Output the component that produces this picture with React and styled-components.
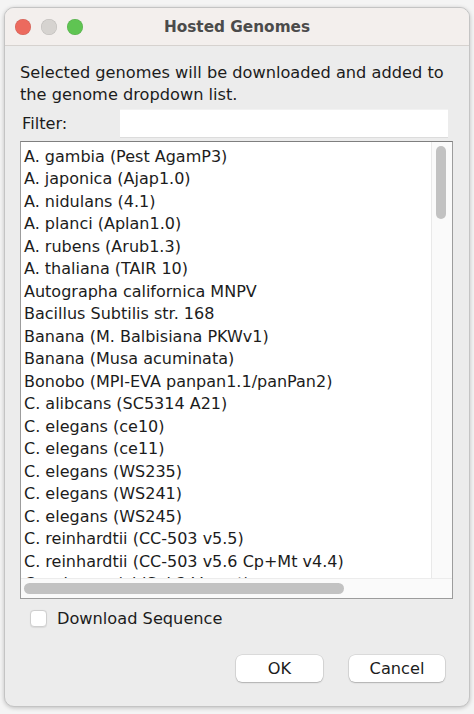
import React from "react";
import styled, { createGlobalStyle } from "styled-components";

const Global = createGlobalStyle`
  html, body { margin: 0; padding: 0; background: #f4f4f4; }
  body { font-family: "DejaVu Sans", "Liberation Sans", sans-serif; color: #1c1c1c; }
  * { box-sizing: border-box; }
`;

const Screen = styled.div`
  width: 474px;
  height: 714px;
  padding: 7px 4px 7px 4px;
`;

const Window = styled.div`
  width: 466px;
  height: 700px;
  display: flex;
  flex-direction: column;
  background: #ececec;
  border: 1px solid #c4c4c4;
  border-radius: 10px;
  overflow: hidden;
  box-shadow: 0 1px 4px rgba(0, 0, 0, 0.22);
`;

const TitleBar = styled.div`
  height: 38px;
  flex: none;
  display: grid;
  grid-template-columns: 1fr auto 1fr;
  align-items: center;
  background: #f3efed;
  border-bottom: 1px solid #d6d2cf;
  padding-left: 10px;
`;

const Lights = styled.div`
  display: flex;
  gap: 10px;
`;

const Light = styled.span`
  width: 16px;
  height: 16px;
  border-radius: 50%;
  background: ${(p) => p.$color};
  box-shadow: inset 0 0 0 0.5px rgba(0, 0, 0, 0.12);
`;

const Title = styled.div`
  font-weight: bold;
  font-size: 15.3px;
  color: #4b4b4b;
  margin-left: -10px;
`;

const Body = styled.div`
  flex: 1;
  display: flex;
  flex-direction: column;
  padding: 16px 16px 0 15px;
`;

const Description = styled.p`
  margin: 0;
  font-size: 16.2px;
  line-height: 22px;
  height: 44px;
`;

const FilterRow = styled.div`
  margin-top: 3px;
  display: flex;
  align-items: center;
  height: 28px;
  padding-right: 5px;
`;

const Label = styled.label`
  width: 100px;
  padding-left: 2px;
  font-size: 16.2px;
`;

const FilterInput = styled.input`
  flex: 1;
  height: 28px;
  border: none;
  outline: none;
  background: #ffffff;
  box-shadow: 0 1px 0 #dcdcdc, inset 0 1px 0 #f2f2f2;
  font: inherit;
`;

const ListBox = styled.div`
  margin-top: 4px;
  height: 458px;
  border: 1px solid #9c9c9c;
  border-top-color: #7f7f7f;
  background: #ffffff;
  display: grid;
  grid-template-columns: 1fr 21px;
  grid-template-rows: 1fr 20px;
`;

const Items = styled.div`
  overflow: hidden;
  padding: 3.5px 0 0 3px;
`;

const Item = styled.div`
  height: 22.5px;
  line-height: 22.5px;
  font-size: 16px;
  white-space: nowrap;
  color: #1c1c1c;
`;

const VTrack = styled.div`
  background: #fafafa;
  border-left: 1px solid #e9e9e9;
  padding: 4px 0 0 4px;
`;

const VThumb = styled.div`
  width: 10px;
  height: 73px;
  border-radius: 5px;
  background: #c2c2c2;
`;

const HTrack = styled.div`
  background: #fafafa;
  border-top: 1px solid #ececec;
  padding: 4px 0 0 3px;
`;

const HThumb = styled.div`
  width: 320px;
  height: 11px;
  border-radius: 6px;
  background: #c2c2c2;
`;

const Corner = styled.div`
  background: #fafafa;
  border-top: 1px solid #ececec;
`;

const CheckRow = styled.label`
  margin-top: 9px;
  height: 20px;
  display: flex;
  align-items: center;
  gap: 10px;
  padding-left: 10px;
  font-size: 16.2px;
`;

const CheckBox = styled.span`
  width: 17px;
  height: 17px;
  border-radius: 4px;
  background: #ffffff;
  border: 1px solid #cfcfcf;
  box-shadow: 0 0.5px 1px rgba(0, 0, 0, 0.08);
`;

const Buttons = styled.div`
  margin-top: 27px;
  display: flex;
  justify-content: flex-end;
  gap: 26px;
  padding-right: 8px;
`;

const Button = styled.button`
  width: ${(p) => p.$w}px;
  height: 27px;
  border: none;
  border-radius: 6px;
  background: #ffffff;
  box-shadow: 0 0 0 0.5px rgba(0, 0, 0, 0.14), 0 1px 1.5px rgba(0, 0, 0, 0.2);
  font-family: "DejaVu Sans", "Liberation Sans", sans-serif;
  font-size: 16.2px;
  color: #1c1c1c;
  padding: 0;
`;

const genomes = [
  "A. gambia (Pest AgamP3)",
  "A. japonica (Ajap1.0)",
  "A. nidulans (4.1)",
  "A. planci (Aplan1.0)",
  "A. rubens (Arub1.3)",
  "A. thaliana (TAIR 10)",
  "Autographa californica MNPV",
  "Bacillus Subtilis str. 168",
  "Banana (M. Balbisiana PKWv1)",
  "Banana (Musa acuminata)",
  "Bonobo (MPI-EVA panpan1.1/panPan2)",
  "C. alibcans (SC5314 A21)",
  "C. elegans (ce10)",
  "C. elegans (ce11)",
  "C. elegans (WS235)",
  "C. elegans (WS241)",
  "C. elegans (WS245)",
  "C. reinhardtii (CC-503 v5.5)",
  "C. reinhardtii (CC-503 v5.6 Cp+Mt v4.4)",
  "C. sabaeus (chlSab2 Vervet)",
];

export default function App() {
  return (
    <>
      <Global />
      <Screen>
        <Window>
          <TitleBar>
            <Lights>
              <Light $color="#ec6a5e" />
              <Light $color="#d6d3d0" />
              <Light $color="#5fc452" />
            </Lights>
            <Title>Hosted Genomes</Title>
            <span />
          </TitleBar>
          <Body>
            <Description>
              Selected genomes will be downloaded and added to the genome dropdown list.
            </Description>
            <FilterRow>
              <Label>Filter:</Label>
              <FilterInput />
            </FilterRow>
            <ListBox>
              <Items>
                {genomes.map((g) => (
                  <Item key={g}>{g}</Item>
                ))}
              </Items>
              <VTrack>
                <VThumb />
              </VTrack>
              <HTrack>
                <HThumb />
              </HTrack>
              <Corner />
            </ListBox>
            <CheckRow>
              <CheckBox />
              Download Sequence
            </CheckRow>
            <Buttons>
              <Button $w={87}>OK</Button>
              <Button $w={96}>Cancel</Button>
            </Buttons>
          </Body>
        </Window>
      </Screen>
    </>
  );
}
